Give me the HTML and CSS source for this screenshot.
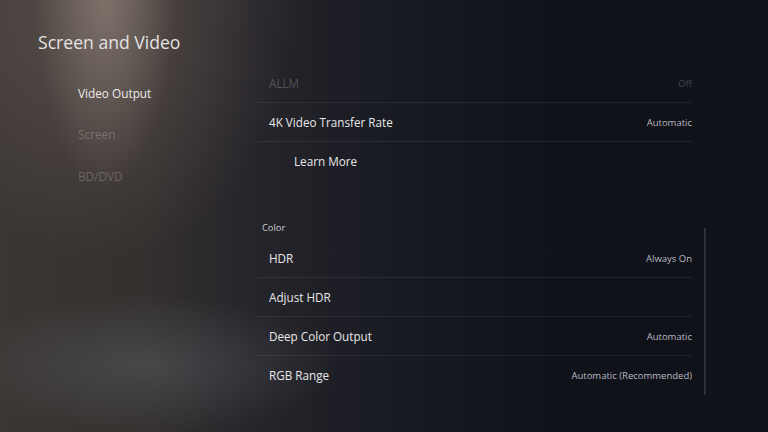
FILE: index.html
```html
<!DOCTYPE html>
<html lang="en">
<head>
    <meta charset="UTF-8">
    <meta name="viewport" content="width=device-width, initial-scale=1.0">
    <title>Screen and Video</title>
    <link rel="stylesheet" href="styles.css">
</head>
<body>
    <div class="screen">
        <aside class="sidebar">
            <h1 class="title">Screen and Video</h1>
            <nav class="nav">
                <div class="nav-item active">Video Output</div>
                <div class="nav-item">Screen</div>
                <div class="nav-item">BD/DVD</div>
            </nav>
        </aside>

        <main class="content">
            <div class="list">
                <div class="row faded">
                    <span class="label">ALLM</span>
                    <span class="value">Off</span>
                </div>
                <div class="row">
                    <span class="label">4K Video Transfer Rate</span>
                    <span class="value">Automatic</span>
                </div>
                <div class="row sub no-line">
                    <span class="label">Learn More</span>
                </div>

                <div class="section">Color</div>

                <div class="row">
                    <span class="label">HDR</span>
                    <span class="value">Always On</span>
                </div>
                <div class="row">
                    <span class="label">Adjust HDR</span>
                </div>
                <div class="row">
                    <span class="label">Deep Color Output</span>
                    <span class="value">Automatic</span>
                </div>
                <div class="row no-line">
                    <span class="label">RGB Range</span>
                    <span class="value">Automatic (Recommended)</span>
                </div>
            </div>
            <div class="scroll">
                <div class="scroll-track"></div>
            </div>
        </main>
    </div>
</body>
</html>
```

FILE: styles.css
```css
html, body {
    margin: 0;
    padding: 0;
}
body {
    width: 768px;
    height: 432px;
    overflow: hidden;
    font-family: "Open Sans", "Noto Sans", sans-serif;
    color: #e6e6e8;
    background-color: #10121a;
    background-image:
        radial-gradient(ellipse 70px 200px at 105px -10px, rgba(160, 145, 135, 0.55), rgba(160, 145, 135, 0) 100%),
        radial-gradient(ellipse 200px 260px at 100px 0px, rgba(120, 105, 98, 0.5), rgba(120, 105, 98, 0) 100%),
        radial-gradient(ellipse 190px 70px at 150px 365px, rgba(95, 100, 106, 0.45), rgba(95, 100, 106, 0) 100%),
        linear-gradient(90deg, #3b3634 0px, #34302f 150px, #25242a 260px, #181a22 400px, #10121a 560px);
}
.screen {
    display: flex;
    height: 432px;
}
.sidebar {
    width: 258px;
    flex-shrink: 0;
}
.title {
    margin: 0;
    padding: 29px 0 0 38px;
    font-size: 17.6px;
    font-weight: 400;
    line-height: 26px;
    color: #e4e2e2;
}
.nav {
    padding: 28px 0 0 78px;
}
.nav-item {
    height: 41.3px;
    line-height: 20px;
    font-size: 11.8px;
    color: rgba(255, 255, 255, 0.22);
}
.nav-item.active {
    color: #ecebeb;
}
.content {
    display: flex;
    gap: 12px;
}
.list {
    width: 434px;
    padding-top: 64px;
}
.row {
    display: flex;
    justify-content: space-between;
    align-items: center;
    height: 38px;
    padding: 0 0 0 11px;
    border-bottom: 1px solid rgba(255, 255, 255, 0.075);
}
.row.no-line {
    border-bottom-color: transparent;
}
.label {
    font-size: 11.7px;
    color: #e8e8ea;
}
.value {
    font-size: 9.5px;
    color: #b9bac0;
}
.row.faded .label,
.row.faded .value {
    color: rgba(255, 255, 255, 0.22);
}
.row.sub {
    padding-left: 36px;
}
.section {
    height: 58px;
    box-sizing: border-box;
    padding: 40px 0 0 4px;
    font-size: 9.3px;
    line-height: 14px;
    color: #cfcfd4;
}
.scroll {
    padding-top: 228px;
}
.scroll-track {
    width: 2px;
    height: 167px;
    background-color: rgba(255, 255, 255, 0.13);
}
```
